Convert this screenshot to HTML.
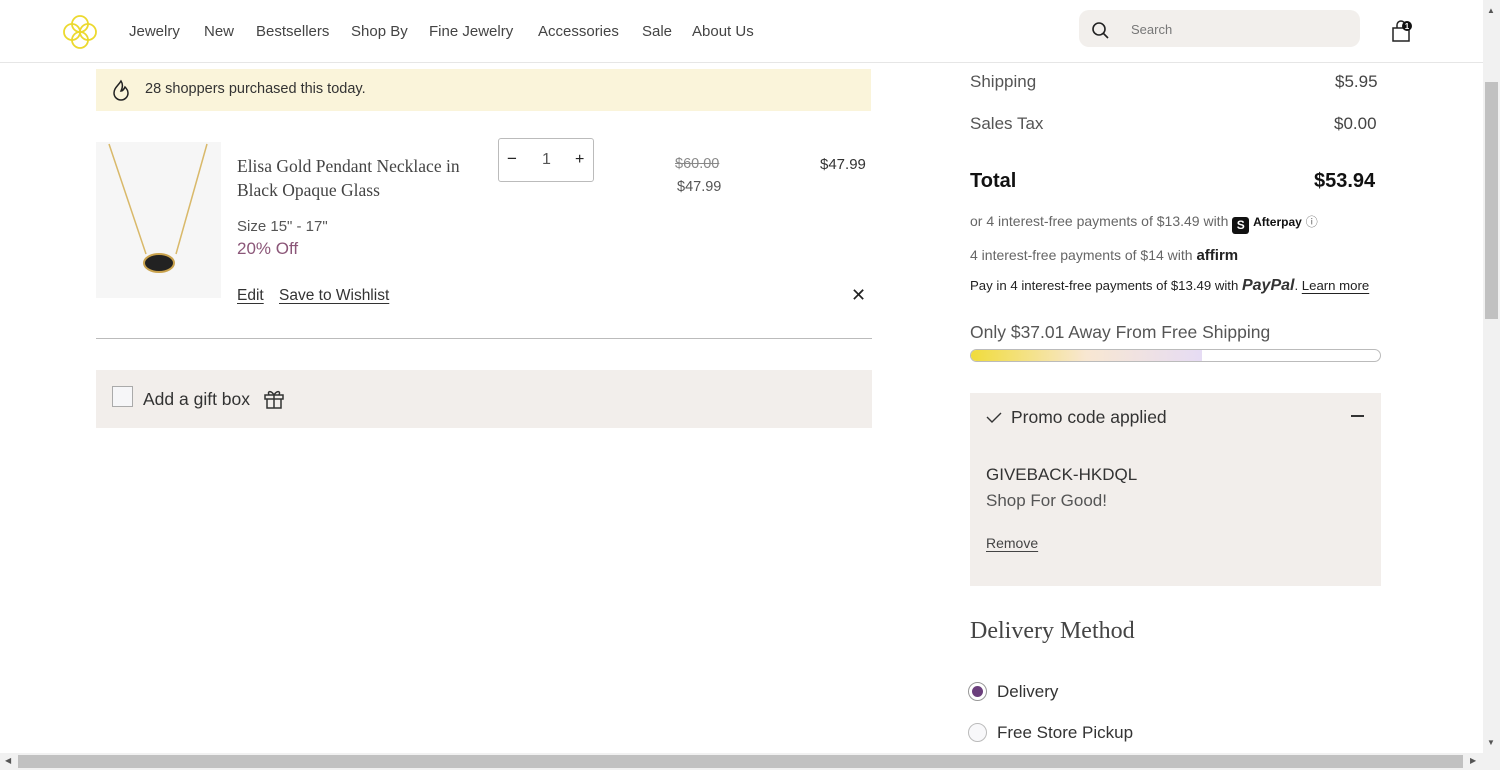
<!DOCTYPE html>
<html><head><meta charset="utf-8"><style>
*{margin:0;padding:0;box-sizing:border-box}
body{width:1500px;height:770px;overflow:hidden;background:#fff;font-family:"Liberation Sans",sans-serif;color:#333;position:relative}
.a{position:absolute;white-space:nowrap}
.serif{font-family:"Liberation Serif",serif}
.nav{font-size:15px;color:#444;top:23px}
u{text-decoration:underline;text-underline-offset:3px}
</style></head><body>
<div class="a" style="left:0;top:0;width:1483px;height:63px;border-bottom:1px solid #e6e6e6;background:#fff"></div>
<svg class="a" style="left:62px;top:14px" width="36" height="36" viewBox="0 0 36 36" fill="none" stroke="#ecd92f" stroke-width="1.8"><circle cx="18" cy="10" r="8"/><circle cx="18" cy="26" r="8"/><circle cx="10" cy="18" r="8"/><circle cx="26" cy="18" r="8"/></svg>
<div class="a nav" style="left:129px">Jewelry</div>
<div class="a nav" style="left:204px">New</div>
<div class="a nav" style="left:256px">Bestsellers</div>
<div class="a nav" style="left:351px">Shop By</div>
<div class="a nav" style="left:429px">Fine Jewelry</div>
<div class="a nav" style="left:538px">Accessories</div>
<div class="a nav" style="left:642px">Sale</div>
<div class="a nav" style="left:692px">About Us</div>
<div class="a" style="left:1079px;top:10px;width:281px;height:37px;background:#f2efec;border-radius:10px"></div>
<svg class="a" style="left:1091px;top:21px" width="18" height="18" viewBox="0 0 18 18" fill="none" stroke="#222" stroke-width="1.6"><circle cx="8" cy="8" r="6"/><path d="M12.5 12.5 L17 17"/></svg>
<div class="a" style="left:1131px;top:22px;font-size:13px;color:#777">Search</div>
<svg class="a" style="left:1389px;top:18px" width="26" height="26" viewBox="0 0 26 26" fill="none" stroke="#222" stroke-width="1.5"><path d="M4 10 L20 10 L20 23 L4 23 Z"/><path d="M8 10 V7 a4 4 0 0 1 8 0 V10"/><circle cx="18" cy="8" r="5" fill="#111" stroke="none"/><text x="18" y="11" font-size="8" fill="#fff" stroke="none" text-anchor="middle" font-family="Liberation Sans" font-weight="bold">1</text></svg>
<div class="a" style="left:96px;top:69px;width:775px;height:42px;background:#faf4da"></div>
<svg class="a" style="left:111px;top:79px" width="20" height="22" viewBox="0 0 20 22" fill="none" stroke="#222" stroke-width="1.5"><path d="M10 2 C7 7 3 9 3 14 a7 7 0 0 0 14 0 C17 11 15 9 14 8 C13 10 12 12 10 12 C12 8 12 5 10 2Z"/></svg>
<div class="a" style="left:145px;top:81px;font-size:14.5px;color:#333">28 shoppers purchased this today.</div>
<div class="a" style="left:96px;top:142px;width:125px;height:156px;background:#f6f6f6"></div>
<svg class="a" style="left:96px;top:142px" width="125" height="156" viewBox="0 0 125 156" fill="none"><path d="M13 2 L50 112" stroke="#d9b96a" stroke-width="1.5"/><path d="M111 2 L80 112" stroke="#d9b96a" stroke-width="1.5"/><ellipse cx="63" cy="121" rx="15" ry="9" fill="#222" stroke="#c9a24d" stroke-width="2"/></svg>
<div class="a serif" style="left:237px;top:154px;font-size:17.5px;color:#444;line-height:24px">Elisa Gold Pendant Necklace in<br>Black Opaque Glass</div>
<div class="a" style="left:237px;top:218px;font-size:15px;color:#555">Size 15" - 17"</div>
<div class="a" style="left:237px;top:239px;font-size:17px;color:#8b5678">20% Off</div>
<div class="a" style="left:237px;top:287px;font-size:15.5px;color:#333"><u>Edit</u></div>
<div class="a" style="left:279px;top:287px;font-size:15.5px;color:#333"><u>Save to Wishlist</u></div>
<div class="a" style="left:498px;top:138px;width:96px;height:44px;border:1px solid #bbb;border-radius:3px"></div>
<div class="a" style="left:507px;top:149px;font-size:17px;color:#222">−</div>
<div class="a" style="left:542px;top:151px;font-size:16px;color:#555">1</div>
<div class="a" style="left:575px;top:151px;font-size:16px;color:#222">+</div>
<div class="a" style="left:675px;top:156px;font-size:14.5px;color:#888;text-decoration:line-through">$60.00</div>
<div class="a" style="left:677px;top:179px;font-size:14.5px;color:#555">$47.99</div>
<div class="a" style="left:820px;top:156px;font-size:15px;color:#333">$47.99</div>
<div class="a" style="left:851px;top:285px;font-size:18px;color:#222">✕</div>
<div class="a" style="left:96px;top:338px;width:776px;height:1px;background:#bbb"></div>
<div class="a" style="left:96px;top:370px;width:776px;height:58px;background:#f2eeeb"></div>
<div class="a" style="left:112px;top:386px;width:21px;height:21px;border:1px solid #aaa;background:#f6f6f8"></div>
<div class="a" style="left:143px;top:389px;font-size:17.5px;color:#333">Add a gift box</div>
<svg class="a" style="left:263px;top:388px" width="22" height="22" viewBox="0 0 22 22" fill="none" stroke="#333" stroke-width="1.5"><rect x="2" y="7" width="18" height="4"/><path d="M4 11 V20 H18 V11 M11 7 V20"/><path d="M11 7 C8 2 4 3 6 7 M11 7 C14 2 18 3 16 7"/></svg>
<div class="a" style="left:970px;top:72px;font-size:17px;color:#555">Shipping</div>
<div class="a" style="left:1335px;top:72px;font-size:17px;color:#444">$5.95</div>
<div class="a" style="left:970px;top:114px;font-size:17px;color:#555">Sales Tax</div>
<div class="a" style="left:1334px;top:114px;font-size:17px;color:#444">$0.00</div>
<div class="a" style="left:970px;top:170px;font-size:20px;font-weight:bold;color:#111">Total</div>
<div class="a" style="left:1314px;top:170px;font-size:20px;font-weight:bold;color:#111">$53.94</div>
<div class="a" style="left:970px;top:213px;font-size:14px;color:#666">or 4 interest-free payments of $13.49 with <span style="display:inline-block;width:17px;height:17px;background:#111;color:#fff;border-radius:3px;text-align:center;font-weight:bold;font-size:12px;line-height:17px;vertical-align:-3px">S</span> <b style="color:#111;font-size:12px">Afterpay</b> <span style="font-size:12px">ⓘ</span></div>
<div class="a" style="left:970px;top:247px;font-size:14px;color:#666">4 interest-free payments of $14 with <b style="color:#222;font-size:15px">affirm</b></div>
<div class="a" style="left:970px;top:277px;font-size:13.2px;color:#222">Pay in 4 interest-free payments of $13.49 with <b><i style="font-size:16px;color:#333">PayPal</i></b>. <u>Learn more</u></div>
<div class="a" style="left:970px;top:322px;font-size:17.5px;color:#555">Only $37.01 Away From Free Shipping</div>
<div class="a" style="left:970px;top:349px;width:411px;height:13px;border:1px solid #bbb;border-radius:7px;overflow:hidden"><div style="width:231px;height:100%;background:linear-gradient(90deg,#f0dc3c,#f8e7d2 50%,#e6dcf4)"></div></div>
<div class="a" style="left:970px;top:393px;width:411px;height:193px;background:#f2eeeb"></div>
<svg class="a" style="left:986px;top:410px" width="16" height="14" viewBox="0 0 16 14" fill="none" stroke="#333" stroke-width="1.4"><path d="M1 7 L6 12 L15 3"/></svg>
<div class="a" style="left:1011px;top:407px;font-size:17.5px;color:#333">Promo code applied</div>
<div class="a" style="left:1351px;top:415px;width:13px;height:2px;background:#333"></div>
<div class="a" style="left:986px;top:465px;font-size:17px;color:#333">GIVEBACK-HKDQL</div>
<div class="a" style="left:986px;top:491px;font-size:17px;color:#555">Shop For Good!</div>
<div class="a" style="left:986px;top:535px;font-size:14px;color:#444"><u>Remove</u></div>
<div class="a serif" style="left:970px;top:618px;font-size:24px;color:#444">Delivery Method</div>
<div class="a" style="left:968px;top:682px;width:19px;height:19px;border:1px solid #999;border-radius:50%;background:#fff"><div style="margin:3px;width:11px;height:11px;border-radius:50%;background:#6b3f7c"></div></div>
<div class="a" style="left:997px;top:682px;font-size:17px;color:#333">Delivery</div>
<div class="a" style="left:968px;top:723px;width:19px;height:19px;border:1px solid #bbb;border-radius:50%;background:#f8f8fa"></div>
<div class="a" style="left:997px;top:723px;font-size:17px;color:#333">Free Store Pickup</div>
<div class="a" style="left:1483px;top:0;width:17px;height:753px;background:#f1f1f1"></div>
<div class="a" style="left:1485px;top:82px;width:13px;height:237px;background:#c1c1c1"></div>
<div class="a" style="left:1487px;top:6px;font-size:8px;color:#555">▲</div>
<div class="a" style="left:1487px;top:738px;font-size:8px;color:#555">▼</div>
<div class="a" style="left:0;top:753px;width:1500px;height:17px;background:#f1f1f1"></div>
<div class="a" style="left:18px;top:755px;width:1445px;height:13px;background:#c1c1c1"></div>
<div class="a" style="left:5px;top:756px;font-size:8px;color:#555">◀</div>
<div class="a" style="left:1470px;top:756px;font-size:8px;color:#555">▶</div>
</body></html>
